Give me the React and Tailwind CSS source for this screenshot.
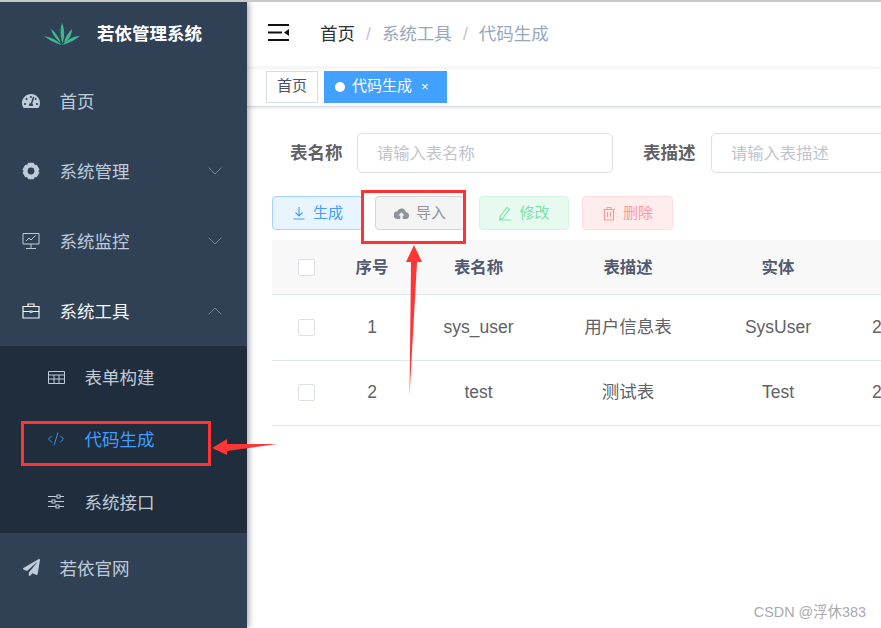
import React from 'react';
import { CodeXml, ChevronDown, ChevronUp } from 'lucide-react';
import { FaTachometerAlt, FaPaperPlane } from 'react-icons/fa';

const font = { fontFamily: '"Liberation Sans", "Noto Sans CJK SC", sans-serif' };

const Logo = () => (
    <svg width="36" height="22" viewBox="0 0 36 22" fill="#3fb68f">
        <path d="M18 22 C10 20 4 16 0 13 C7 14 13 17 18 22Z" />
        <path d="M18 22 C26 20 32 16 36 13 C29 13 23 17 18 22Z" />
        <path d="M17 20 C12 16 8 11 7 6 C11 9 15 14 17 20Z" />
        <path d="M18.500 20 C16 13 16 6 18 0 C20.500 6 21 14 18.500 20Z" />
        <path d="M20 20 C21 14 24 10 28 6 C28 12 25 17 20 20Z" />
    </svg>
);

const GearIcon = () => (
    <svg width="18" height="18" viewBox="0 0 18 18">
        <path fillRule="evenodd" fill="#bfcbd9" d="M6.300 0.800h5.400l1 2 2.200.1 2.600 4.500-1.200 1.600 1.200 1.600-2.600 4.500-2.200.1-1 2H6.300l-1-2-2.200-.1L.5 10.600l1.200-1.600-1.200-1.600 2.600-4.500 2.200-.1zM9 5.600a3.400 3.400 0 1 0 0 6.800 3.400 3.400 0 0 0 0-6.800z" />
    </svg>
);

const MonitorIcon = () => (
    <svg width="18" height="18" viewBox="0 0 18 18" fill="none" stroke="#bfcbd9" strokeWidth="1">
        <path d="M1 1.500h16v10.500H1zM9 12v4.500M4 16.500h10M4 9l3-3 2 2 4.500-4.500" />
    </svg>
);

const CaseIcon = () => (
    <svg width="18" height="18" viewBox="0 0 18 18" fill="none" stroke="#f4f4f5" strokeWidth="1.200">
        <path d="M1 4.500h16v11.500H1zM6 4.500V2h6v2.500M1 9.500h16" />
        <path d="M7.500 8.500h3v2.500h-3z" fill="#bfcbd9" stroke="none" />
    </svg>
);

const TableIcon = () => (
    <svg width="17" height="13" viewBox="0 0 17 13" fill="none" stroke="#bfcbd9" strokeWidth="1">
        <path d="M.5.5h16v12H.5zM.5 4h16M.5 8h16M6 4v8.500M11 4v8.500" />
    </svg>
);

const SliderIcon = () => (
    <svg width="18" height="15" viewBox="0 0 18 15" fill="none" stroke="#bfcbd9" strokeWidth="1">
        <path d="M1 2.500h9M13 2.500h4M1 7.500h4M8 7.500h9M1 12.500h8M12 12.500h5" />
        <rect x="10" y="1" width="3" height="3" />
        <rect x="5" y="6" width="3" height="3" />
        <rect x="9" y="11" width="3" height="3" />
    </svg>
);

const MenuItem = ({ icon, label, arrow, active }) => (
    <div className={`h-[70px] flex items-center pl-[22px] pr-[20px] ${active ? 'text-[#f4f4f5]' : 'text-[#bfcbd9]'}`}>
        <span className="w-[18px] h-[18px] flex items-center justify-center">{icon}</span>
        <span className="ml-[19.500px] pt-[2px] text-[17.5px] flex-1">{label}</span>
        {arrow === 'down' && <ChevronDown size={24} strokeWidth={1} className="text-[#7d8794]" />}
        {arrow === 'up' && <ChevronUp size={24} strokeWidth={1} className="text-[#7d8794]" />}
    </div>
);

const SubItem = ({ icon, label, active }) => (
    <div className={`h-[62.33px] flex items-center pl-[47px] ${active ? 'text-[#409eff]' : 'text-[#bfcbd9]'}`}>
        <span className="w-[18px] h-[18px] flex items-center justify-center">{icon}</span>
        <span className="ml-[19.500px] pt-[2px] text-[17.5px]">{label}</span>
    </div>
);

const Sidebar = () => (
    <aside className="w-[247px] shrink-0 bg-[#304156] shadow-[2px_0_6px_rgba(0,21,41,0.35)] z-10">
        <div className="h-[64px] flex items-center pl-[44px]">
            <Logo />
            <span className="ml-[17px] text-[17.5px] font-bold text-white">若依管理系统</span>
        </div>
        <MenuItem icon={<FaTachometerAlt size={18} />} label="首页" />
        <MenuItem icon={<GearIcon />} label="系统管理" arrow="down" />
        <MenuItem icon={<MonitorIcon />} label="系统监控" arrow="down" />
        <MenuItem icon={<CaseIcon />} label="系统工具" arrow="up" active />
        <div className="bg-[#1f2d3d]">
            <SubItem icon={<TableIcon />} label="表单构建" />
            <SubItem icon={<CodeXml size={18} strokeWidth={1.200} />} label="代码生成" active />
            <SubItem icon={<SliderIcon />} label="系统接口" />
        </div>
        <MenuItem icon={<FaPaperPlane size={17} />} label="若依官网" />
    </aside>
);

const Hamburger = () => (
    <svg className="mb-[4px]" width="21" height="17" viewBox="0 0 21 17" fill="#111">
        <path d="M0 0h21v2H0zM0 7.500h14v2H0zM0 15h21v2H0zM21 5v7l-5-3.500z" />
    </svg>
);

const Navbar = () => (
    <div className="h-[65px] flex items-center pl-[21px] shadow-[0_1px_4px_rgba(0,21,41,0.08)]">
        <Hamburger />
        <div className="ml-[31px] flex items-center text-[17.5px] text-[#97a8be]">
            <span className="text-[#303133]">首页</span>
            <span className="mx-[11px] text-[#c0c4cc]">/</span>
            <span>系统工具</span>
            <span className="mx-[11px] text-[#c0c4cc]">/</span>
            <span>代码生成</span>
        </div>
    </div>
);

const Tags = () => (
    <div className="h-[40px] flex items-center pl-[19px] gap-[6px] border-b border-[#d8dce5] shadow-[0_1px_3px_rgba(0,0,0,0.12)]">
        <div className="h-[32px] w-[52px] flex items-center justify-center border border-[#d8dce5] text-[15px] text-[#495060]">首页</div>
        <div className="h-[32px] w-[123px] flex items-center pl-[11px] bg-[#42a0ff] text-white text-[15px]">
            <span className="w-[10px] h-[10px] rounded-full bg-white" />
            <span className="ml-[7px]">代码生成</span>
            <span className="ml-[9px] text-[13px]">×</span>
        </div>
    </div>
);

const Field = ({ label, placeholder, labelClass, inputClass }) => (
    <div className={`flex items-center shrink-0 ${labelClass}`}>
        <span className="w-[52px] text-[17.5px] font-bold text-[#606266] whitespace-nowrap">{label}</span>
        <div className={`h-[40px] flex items-center pl-[19px] ml-[15px] bg-white border border-[#dcdfe6] rounded-[5px] text-[16.3px] text-[#c0c4cc] whitespace-nowrap ${inputClass}`}>
            {placeholder}
        </div>
    </div>
);

const Btn = ({ icon, label, className }) => (
    <div className={`h-[34px] flex items-center justify-center gap-[7px] border rounded-[4px] text-[15px] ${className}`}>
        {icon}
        <span>{label}</span>
    </div>
);

const DownloadIcon = () => (
    <svg width="14" height="14" viewBox="0 0 14 14" fill="none" stroke="#409eff" strokeWidth="1.100">
        <path d="M7 1v8.500M3.500 6.500 7 10l3.500-3.500M1.500 13h11" />
    </svg>
);

const UploadIcon = () => (
    <svg width="15" height="13" viewBox="0 0 15 13">
        <path fill="#909399" d="M11.800 5.200A4.400 4.400 0 0 0 3.400 4.300 3.500 3.500 0 0 0 3.500 12h2.800V8.600H4.500L7.500 5.300l3 3.300H8.700V12h2.700a3.400 3.400 0 0 0 .4-6.800z" />
    </svg>
);

const EditIcon = () => (
    <svg width="14" height="15" viewBox="0 0 14 15" fill="none" stroke="#7fe0a8" strokeWidth="1.100">
        <path d="M2 10.500 9 1.500l2.500 2-7 9-2.700.8zM1 14h12" />
    </svg>
);

const TrashIcon = () => (
    <svg width="14" height="15" viewBox="0 0 14 15" fill="none" stroke="#f99" strokeWidth="1.100">
        <path d="M1 3.500h12M5 3.500V1.500h4v2M2.500 3.500V14h9V3.500M5.500 6v5M8.500 6v5" />
    </svg>
);

const Checkbox = () => (
    <div className="w-[17px] h-[17px] bg-white border border-[#dcdfe6] rounded-[2px]" />
);

const cols = 'grid grid-cols-[68px_64px_149px_150px_150px_1fr] items-center text-center';

const TableHead = () => (
    <div className={`${cols} h-[55px] bg-[#f8f8f9] border-b border-[#dfe6ec] text-[#515a6e] font-bold text-[16.4px]`}>
        <div className="flex justify-center"><Checkbox /></div>
        <div>序号</div>
        <div>表名称</div>
        <div>表描述</div>
        <div>实体</div>
        <div />
    </div>
);

const TableRow = ({ no, name, desc, entity, h }) => (
    <div className={`${cols} ${h} border-b border-[#dfe6ec] text-[#606266] text-[17.5px]`}>
        <div className="flex justify-center"><Checkbox /></div>
        <div>{no}</div>
        <div>{name}</div>
        <div>{desc}</div>
        <div>{entity}</div>
        <div className="text-left pl-[19px]">2</div>
    </div>
);

const Annotations = () => (
    <div className="absolute inset-0 z-20">
        <div className="absolute left-[361px] top-[188px] w-[105px] h-[54px] border-[3px] border-[#ff3333]" />
        <div className="absolute left-[21px] top-[419px] w-[190px] h-[45px] border-[3px] border-[#ff3333]" />
        <svg className="absolute left-0 top-[-2px]" width="881" height="628" fill="#ff3636">
            <path d="M414 245 422 262 417 262 409.500 396 411 262 406 262Z" />
            <path d="M212 448 227 439 227 444 277 444 227 451 227 455Z" />
        </svg>
    </div>
);

const App = () => {
    return (
        <div className="relative w-[881px] h-[628px] overflow-hidden bg-white border-t-2 border-[#c9c9c9]" style={font}>
            <div className="flex h-full">
                <Sidebar />
                <div className="flex-1 min-w-0 overflow-hidden">
                    <Navbar />
                    <Tags />
                    <div className="pt-[26px] pl-[25px]">
                        <div className="flex items-center pl-[18px] w-[640px]">
                            <Field label="表名称" placeholder="请输入表名称" inputClass="w-[256px]" />
                            <Field label="表描述" placeholder="请输入表描述" labelClass="ml-[30px]" inputClass="w-[256px] ml-[16px]" />
                        </div>
                        <div className="flex mt-[23px] gap-[12px]">
                            <Btn icon={<DownloadIcon />} label="生成" className="w-[91px] bg-[#e8f4ff] border-[#a3d3ff] text-[#409eff]" />
                            <Btn icon={<UploadIcon />} label="导入" className="w-[90px] bg-[#f4f4f5] border-[#d3d4d6] text-[#909399]" />
                            <Btn icon={<EditIcon />} label="修改" className="w-[90px] ml-[2px] bg-[#e7faf0] border-[#d0f5e0] text-[#7fe0a8]" />
                            <Btn icon={<TrashIcon />} label="删除" className="w-[91px] ml-[1px] bg-[#ffeded] border-[#ffdbdb] text-[#ff9999]" />
                        </div>
                        <div className="mt-[10px] w-[640px]">
                            <TableHead />
                            <TableRow no="1" name="sys_user" desc="用户信息表" entity="SysUser" h="h-[66px]" />
                            <TableRow no="2" name="test" desc="测试表" entity="Test" h="h-[65px] pb-[2px]" />
                        </div>
                    </div>
                </div>
            </div>
            <Annotations />
            <div className="absolute right-[15px] bottom-[4px] z-20 text-[14.400px] text-[#aaa]">CSDN @浮休383</div>
        </div>
    );
};

export default App;
